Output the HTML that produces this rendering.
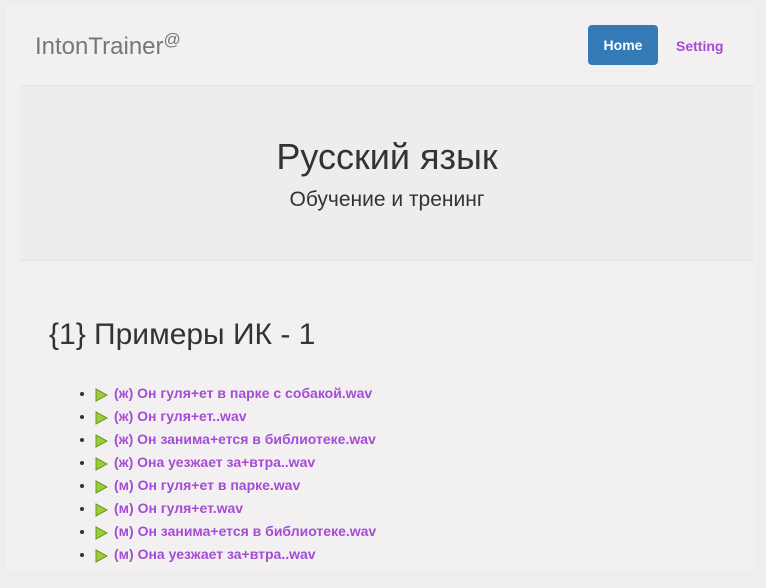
<!DOCTYPE html>
<html><head><meta charset="utf-8"><style>
html,body{margin:0;padding:0;}
body{width:766px;height:588px;background:#efeeee;font-family:"Liberation Sans",sans-serif;position:relative;overflow:hidden;}
.page{position:absolute;left:6px;top:6px;width:750px;height:564px;background:#f3f0f1;}
.brand{position:absolute;left:35px;top:30px;font-size:24px;color:#777;}
.brand sup{font-size:17px;}
.home{position:absolute;left:588px;top:25px;width:70px;height:40px;background:#337ab7;border-radius:4px;color:#fff;font-weight:bold;font-size:14px;line-height:40px;text-align:center;}
.set{position:absolute;left:676px;top:38px;color:#a64bd6;font-weight:bold;font-size:14px;}
.jumbo{position:absolute;left:20px;top:85px;width:734px;height:174px;background:#eeeded;border-top:1px solid #e5e3e3;border-bottom:1px solid #e5e3e3;text-align:center;color:#333;}
.jumbo h1{margin:0;position:absolute;top:50px;width:100%;font-weight:normal;font-size:36px;}
.jumbo p{margin:0;position:absolute;top:102px;width:100%;font-size:21px;}
h2{position:absolute;left:49px;top:318px;margin:0;font-weight:normal;font-size:30px;color:#333;}
ul{position:absolute;left:55px;top:383px;margin:0;padding:0 0 0 40px;list-style:disc;}
li{height:23px;line-height:20px;font-size:14px;font-weight:bold;color:#a64bd6;}
li::marker{color:#333;}
li svg{vertical-align:-4px;margin-right:6px;}
</style></head><body>
<div class="page"></div>
<div class="brand">IntonTrainer<sup>@</sup></div>
<div class="home">Home</div>
<div class="set">Setting</div>
<div class="jumbo"><h1>Русский язык</h1><p>Обучение и тренинг</p></div>
<h2>{1} Примеры ИК - 1</h2>
<ul>
<li><svg width="13" height="14"><polygon points="1,1 12,7 1,13" fill="#9ccc3c" stroke="#6a9a1c"/></svg>(ж) Он гуля+ет в парке с собакой.wav</li>
<li><svg width="13" height="14"><polygon points="1,1 12,7 1,13" fill="#9ccc3c" stroke="#6a9a1c"/></svg>(ж) Он гуля+ет..wav</li>
<li><svg width="13" height="14"><polygon points="1,1 12,7 1,13" fill="#9ccc3c" stroke="#6a9a1c"/></svg>(ж) Он занима+ется в библиотеке.wav</li>
<li><svg width="13" height="14"><polygon points="1,1 12,7 1,13" fill="#9ccc3c" stroke="#6a9a1c"/></svg>(ж) Она уезжает за+втра..wav</li>
<li><svg width="13" height="14"><polygon points="1,1 12,7 1,13" fill="#9ccc3c" stroke="#6a9a1c"/></svg>(м) Он гуля+ет в парке.wav</li>
<li><svg width="13" height="14"><polygon points="1,1 12,7 1,13" fill="#9ccc3c" stroke="#6a9a1c"/></svg>(м) Он гуля+ет.wav</li>
<li><svg width="13" height="14"><polygon points="1,1 12,7 1,13" fill="#9ccc3c" stroke="#6a9a1c"/></svg>(м) Он занима+ется в библиотеке.wav</li>
<li><svg width="13" height="14"><polygon points="1,1 12,7 1,13" fill="#9ccc3c" stroke="#6a9a1c"/></svg>(м) Она уезжает за+втра..wav</li>
</ul>
</body></html>
